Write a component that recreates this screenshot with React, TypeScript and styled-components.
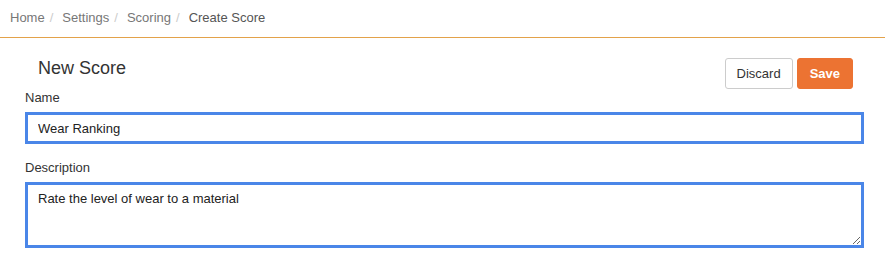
import React from 'react'
import styled, { createGlobalStyle } from 'styled-components'

const GlobalStyle = createGlobalStyle`
  body {
    margin: 0;
    background: #fff;
    font-family: "Liberation Sans", Arial, sans-serif;
    color: #333;
  }
`

const Breadcrumb = styled.nav`
  display: flex;
  align-items: center;
  box-sizing: border-box;
  height: 38px;
  padding: 0 0 3px 10px;
  border-bottom: 1px solid #e3a24a;
  font-size: 13px;
`

const Crumb = styled.span<{ active?: boolean }>`
  color: ${(props) => (props.active ? '#555' : '#777')};
`

const Sep = styled.span`
  color: #ccc;
  padding: 0 9px 0 5px;
`

const Page = styled.div`
  padding: 0 21px 0 25px;
`

const HeaderRow = styled.div`
  display: flex;
  justify-content: space-between;
  align-items: flex-start;
  margin-top: 20px;
  padding-right: 11px;
`

const Title = styled.h2`
  margin: 0;
  padding-left: 13px;
  font-size: 18px;
  line-height: 20px;
  font-weight: normal;
  color: #333;
`

const Buttons = styled.div`
  display: flex;
  gap: 4px;
`

const Button = styled.button<{ primary?: boolean }>`
  height: 31px;
  padding: 0 ${(props) => (props.primary ? 12 : 11)}px;
  font-family: "Liberation Sans", Arial, sans-serif;
  font-size: 13px;
  border-radius: 3px;
  border: 1px solid ${(props) => (props.primary ? '#ec7332' : '#ccc')};
  background: ${(props) => (props.primary ? '#ec7332' : '#fff')};
  color: ${(props) => (props.primary ? '#fff' : '#333')};
  font-weight: ${(props) => (props.primary ? 'bold' : 'normal')};
  cursor: pointer;
`

const Label = styled.label<{ gap: number }>`
  display: block;
  margin-top: ${(props) => props.gap}px;
  margin-bottom: 7px;
  font-size: 13px;
  line-height: 15px;
  color: #333;
`

const TextInput = styled.input`
  display: block;
  box-sizing: border-box;
  width: 100%;
  height: 32px;
  padding: 0 10px;
  border: 3px solid #4a86e8;
  font-family: "Liberation Sans", Arial, sans-serif;
  font-size: 13px;
  color: #222;
  outline: none;
`

const TextArea = styled.textarea`
  display: block;
  box-sizing: border-box;
  width: 100%;
  height: 66px;
  padding: 6px 10px;
  border: 3px solid #4a86e8;
  font-family: "Liberation Sans", Arial, sans-serif;
  font-size: 13px;
  line-height: 15px;
  color: #222;
  outline: none;
  margin: 0;
`

export default function App() {
  const crumbs = ['Home', 'Settings', 'Scoring']
  return (
    <>
      <GlobalStyle />
      <Breadcrumb>
        {crumbs.map((c) => (
          <React.Fragment key={c}>
            <Crumb>{c}</Crumb>
            <Sep>/</Sep>
          </React.Fragment>
        ))}
        <Crumb active>Create Score</Crumb>
      </Breadcrumb>
      <Page>
        <HeaderRow>
          <Title>New Score</Title>
          <Buttons>
            <Button>Discard</Button>
            <Button primary>Save</Button>
          </Buttons>
        </HeaderRow>
        <Label htmlFor="name" gap={1}>Name</Label>
        <TextInput id="name" defaultValue="Wear Ranking" />
        <Label htmlFor="description" gap={16}>Description</Label>
        <TextArea id="description" defaultValue="Rate the level of wear to a material" />
      </Page>
    </>
  )
}
